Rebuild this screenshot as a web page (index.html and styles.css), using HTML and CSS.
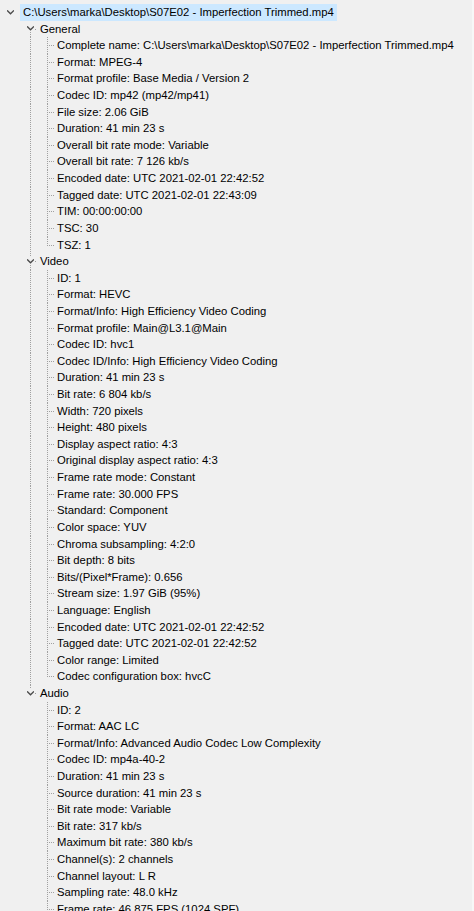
FILE: index.html
```html
<!DOCTYPE html>
<html lang="en">
<head>
<meta charset="utf-8">
<title>MediaInfo</title>
<link rel="stylesheet" href="styles.css">
</head>
<body>
<div class="tree">
  <div class="row"><span class="cell chev root"><svg width="7" height="5" viewBox="0 0 7 5"><polyline points="0.5,0.8 3.5,3.8 6.5,0.8"/></svg></span><span class="label sel">C:\Users\marka\Desktop\S07E02 - Imperfection Trimmed.mp4</span></div>

  <div class="row"><span class="cell"></span><span class="cell chev below"><svg width="7" height="5" viewBox="0 0 7 5"><polyline points="0.5,0.8 3.5,3.8 6.5,0.8"/></svg></span><span class="label">General</span></div>
  <div class="row"><span class="cell"></span><span class="cell line"></span><span class="cell branch"></span><span class="label">Complete name: C:\Users\marka\Desktop\S07E02 - Imperfection Trimmed.mp4</span></div>
  <div class="row"><span class="cell"></span><span class="cell line"></span><span class="cell branch"></span><span class="label">Format: MPEG-4</span></div>
  <div class="row"><span class="cell"></span><span class="cell line"></span><span class="cell branch"></span><span class="label">Format profile: Base Media / Version 2</span></div>
  <div class="row"><span class="cell"></span><span class="cell line"></span><span class="cell branch"></span><span class="label">Codec ID: mp42 (mp42/mp41)</span></div>
  <div class="row"><span class="cell"></span><span class="cell line"></span><span class="cell branch"></span><span class="label">File size: 2.06 GiB</span></div>
  <div class="row"><span class="cell"></span><span class="cell line"></span><span class="cell branch"></span><span class="label">Duration: 41 min 23 s</span></div>
  <div class="row"><span class="cell"></span><span class="cell line"></span><span class="cell branch"></span><span class="label">Overall bit rate mode: Variable</span></div>
  <div class="row"><span class="cell"></span><span class="cell line"></span><span class="cell branch"></span><span class="label">Overall bit rate: 7 126 kb/s</span></div>
  <div class="row"><span class="cell"></span><span class="cell line"></span><span class="cell branch"></span><span class="label">Encoded date: UTC 2021-02-01 22:42:52</span></div>
  <div class="row"><span class="cell"></span><span class="cell line"></span><span class="cell branch"></span><span class="label">Tagged date: UTC 2021-02-01 22:43:09</span></div>
  <div class="row"><span class="cell"></span><span class="cell line"></span><span class="cell branch"></span><span class="label">TIM: 00:00:00:00</span></div>
  <div class="row"><span class="cell"></span><span class="cell line"></span><span class="cell branch"></span><span class="label">TSC: 30</span></div>
  <div class="row"><span class="cell"></span><span class="cell line"></span><span class="cell branch end"></span><span class="label">TSZ: 1</span></div>

  <div class="row"><span class="cell"></span><span class="cell chev above below"><svg width="7" height="5" viewBox="0 0 7 5"><polyline points="0.5,0.8 3.5,3.8 6.5,0.8"/></svg></span><span class="label">Video</span></div>
  <div class="row"><span class="cell"></span><span class="cell line"></span><span class="cell branch"></span><span class="label">ID: 1</span></div>
  <div class="row"><span class="cell"></span><span class="cell line"></span><span class="cell branch"></span><span class="label">Format: HEVC</span></div>
  <div class="row"><span class="cell"></span><span class="cell line"></span><span class="cell branch"></span><span class="label">Format/Info: High Efficiency Video Coding</span></div>
  <div class="row"><span class="cell"></span><span class="cell line"></span><span class="cell branch"></span><span class="label">Format profile: Main@L3.1@Main</span></div>
  <div class="row"><span class="cell"></span><span class="cell line"></span><span class="cell branch"></span><span class="label">Codec ID: hvc1</span></div>
  <div class="row"><span class="cell"></span><span class="cell line"></span><span class="cell branch"></span><span class="label">Codec ID/Info: High Efficiency Video Coding</span></div>
  <div class="row"><span class="cell"></span><span class="cell line"></span><span class="cell branch"></span><span class="label">Duration: 41 min 23 s</span></div>
  <div class="row"><span class="cell"></span><span class="cell line"></span><span class="cell branch"></span><span class="label">Bit rate: 6 804 kb/s</span></div>
  <div class="row"><span class="cell"></span><span class="cell line"></span><span class="cell branch"></span><span class="label">Width: 720 pixels</span></div>
  <div class="row"><span class="cell"></span><span class="cell line"></span><span class="cell branch"></span><span class="label">Height: 480 pixels</span></div>
  <div class="row"><span class="cell"></span><span class="cell line"></span><span class="cell branch"></span><span class="label">Display aspect ratio: 4:3</span></div>
  <div class="row"><span class="cell"></span><span class="cell line"></span><span class="cell branch"></span><span class="label">Original display aspect ratio: 4:3</span></div>
  <div class="row"><span class="cell"></span><span class="cell line"></span><span class="cell branch"></span><span class="label">Frame rate mode: Constant</span></div>
  <div class="row"><span class="cell"></span><span class="cell line"></span><span class="cell branch"></span><span class="label">Frame rate: 30.000 FPS</span></div>
  <div class="row"><span class="cell"></span><span class="cell line"></span><span class="cell branch"></span><span class="label">Standard: Component</span></div>
  <div class="row"><span class="cell"></span><span class="cell line"></span><span class="cell branch"></span><span class="label">Color space: YUV</span></div>
  <div class="row"><span class="cell"></span><span class="cell line"></span><span class="cell branch"></span><span class="label">Chroma subsampling: 4:2:0</span></div>
  <div class="row"><span class="cell"></span><span class="cell line"></span><span class="cell branch"></span><span class="label">Bit depth: 8 bits</span></div>
  <div class="row"><span class="cell"></span><span class="cell line"></span><span class="cell branch"></span><span class="label">Bits/(Pixel*Frame): 0.656</span></div>
  <div class="row"><span class="cell"></span><span class="cell line"></span><span class="cell branch"></span><span class="label">Stream size: 1.97 GiB (95%)</span></div>
  <div class="row"><span class="cell"></span><span class="cell line"></span><span class="cell branch"></span><span class="label">Language: English</span></div>
  <div class="row"><span class="cell"></span><span class="cell line"></span><span class="cell branch"></span><span class="label">Encoded date: UTC 2021-02-01 22:42:52</span></div>
  <div class="row"><span class="cell"></span><span class="cell line"></span><span class="cell branch"></span><span class="label">Tagged date: UTC 2021-02-01 22:42:52</span></div>
  <div class="row"><span class="cell"></span><span class="cell line"></span><span class="cell branch"></span><span class="label">Color range: Limited</span></div>
  <div class="row"><span class="cell"></span><span class="cell line"></span><span class="cell branch end"></span><span class="label">Codec configuration box: hvcC</span></div>

  <div class="row"><span class="cell"></span><span class="cell chev above"><svg width="7" height="5" viewBox="0 0 7 5"><polyline points="0.5,0.8 3.5,3.8 6.5,0.8"/></svg></span><span class="label">Audio</span></div>
  <div class="row"><span class="cell"></span><span class="cell"></span><span class="cell branch"></span><span class="label">ID: 2</span></div>
  <div class="row"><span class="cell"></span><span class="cell"></span><span class="cell branch"></span><span class="label">Format: AAC LC</span></div>
  <div class="row"><span class="cell"></span><span class="cell"></span><span class="cell branch"></span><span class="label">Format/Info: Advanced Audio Codec Low Complexity</span></div>
  <div class="row"><span class="cell"></span><span class="cell"></span><span class="cell branch"></span><span class="label">Codec ID: mp4a-40-2</span></div>
  <div class="row"><span class="cell"></span><span class="cell"></span><span class="cell branch"></span><span class="label">Duration: 41 min 23 s</span></div>
  <div class="row"><span class="cell"></span><span class="cell"></span><span class="cell branch"></span><span class="label">Source duration: 41 min 23 s</span></div>
  <div class="row"><span class="cell"></span><span class="cell"></span><span class="cell branch"></span><span class="label">Bit rate mode: Variable</span></div>
  <div class="row"><span class="cell"></span><span class="cell"></span><span class="cell branch"></span><span class="label">Bit rate: 317 kb/s</span></div>
  <div class="row"><span class="cell"></span><span class="cell"></span><span class="cell branch"></span><span class="label">Maximum bit rate: 380 kb/s</span></div>
  <div class="row"><span class="cell"></span><span class="cell"></span><span class="cell branch"></span><span class="label">Channel(s): 2 channels</span></div>
  <div class="row"><span class="cell"></span><span class="cell"></span><span class="cell branch"></span><span class="label">Channel layout: L R</span></div>
  <div class="row"><span class="cell"></span><span class="cell"></span><span class="cell branch"></span><span class="label">Sampling rate: 48.0 kHz</span></div>
  <div class="row"><span class="cell"></span><span class="cell"></span><span class="cell branch"></span><span class="label">Frame rate: 46.875 FPS (1024 SPF)</span></div>
  <div class="row"><span class="cell"></span><span class="cell"></span><span class="cell branch"></span><span class="label">Stream size: 94.0 MiB (4%)</span></div>
</div>
</body>
</html>
```

FILE: styles.css
```css
html, body {
  margin: 0;
  padding: 0;
  height: 100%;
  overflow: hidden;
  background: #f0f0f0;
}

body {
  border-right: 2px solid #f7f7f7;
  box-sizing: border-box;
}

.tree {
  --dot: #a0a0a0;
  --vline: repeating-linear-gradient(to bottom, var(--dot) 0 1px, transparent 1px 2px);
  --hline: repeating-linear-gradient(to right, var(--dot) 0 1px, transparent 1px 2px);
  display: flex;
  flex-direction: column;
  padding: 4px 0 0 3px;
  font-family: "Liberation Sans", Arial, sans-serif;
  font-size: 11.3px;
  color: #000;
}

.row {
  display: flex;
  align-items: stretch;
  height: 16.62px;
  flex: none;
}

.cell {
  flex: none;
  width: 17px;
  background-repeat: no-repeat;
}

.line {
  background-image: var(--vline);
  background-size: 1px 100%;
  background-position: 10px 0;
}

.branch {
  background-image: var(--vline), var(--hline);
  background-size: 1px 100%, 7px 1px;
  background-position: 10px 0, 10px 8px;
}

.branch.end {
  background-size: 1px 8px, 7px 1px;
}

.chev {
  display: flex;
  align-items: center;
  background-image: var(--hline);
  background-size: 3px 1px;
  background-position: 15px 8px;
}

.chev svg {
  margin-left: 7px;
  display: block;
}

.chev.root {
  background-image: none;
}

.chev.root svg {
  margin-left: 4px;
}

.chev svg polyline {
  fill: none;
  stroke: #4a4a4a;
  stroke-width: 1.25;
  stroke-linecap: square;
}

.chev.below {
  background-image: var(--hline), var(--vline);
  background-size: 3px 1px, 1px 5px;
  background-position: 15px 8px, 10px 100%;
}

.chev.above {
  background-image: var(--hline), var(--vline);
  background-size: 3px 1px, 1px 4px;
  background-position: 15px 8px, 10px 0;
}

.chev.above.below {
  background-image: var(--hline), var(--vline), var(--vline);
  background-size: 3px 1px, 1px 4px, 1px 5px;
  background-position: 15px 8px, 10px 0, 10px 100%;
}

.label {
  padding: 0 3px;
  line-height: 16.62px;
  white-space: nowrap;
}

.label.sel {
  background: #cce8ff;
}
```
